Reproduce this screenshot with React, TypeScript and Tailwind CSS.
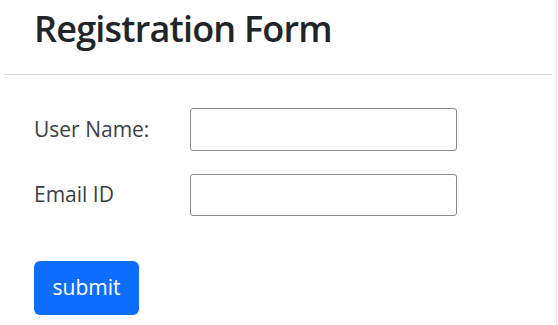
const App = () => {
  return (
    <div className="w-[557px] h-[325px] bg-white border-r border-[#e3e8ee] font-['Open_Sans',sans-serif] text-[#212529]">
      <div className="pl-[34px] pt-[3px] h-[74px]">
        <h1 className="text-[36px] font-semibold leading-[52px] tracking-[-0.8px]">Registration Form</h1>
      </div>
      <hr className="mx-1 border-t border-[#d6d9dc]" />
      <form className="flex flex-col pl-[34px] pt-[33px]">
        <div className="flex items-center h-[43px]">
          <label className="w-[156px] text-[21px] text-[#3a3f44]">User Name:</label>
          <input type="text" className="w-[267px] h-[43px] border border-[#8a8a8a] rounded-[3px]" />
        </div>
        <div className="flex items-center h-[42px] mt-[23px]">
          <label className="w-[156px] text-[21px] text-[#3a3f44]">Email ID</label>
          <input type="text" className="w-[267px] h-[42px] border border-[#8a8a8a] rounded-[3px]" />
        </div>
        <div className="mt-[45px]">
          <button type="submit" className="w-[105px] h-[54px] bg-[#0d6efd] text-white text-[21px] rounded-[6px]">submit</button>
        </div>
      </form>
    </div>
  )
}

export default App
